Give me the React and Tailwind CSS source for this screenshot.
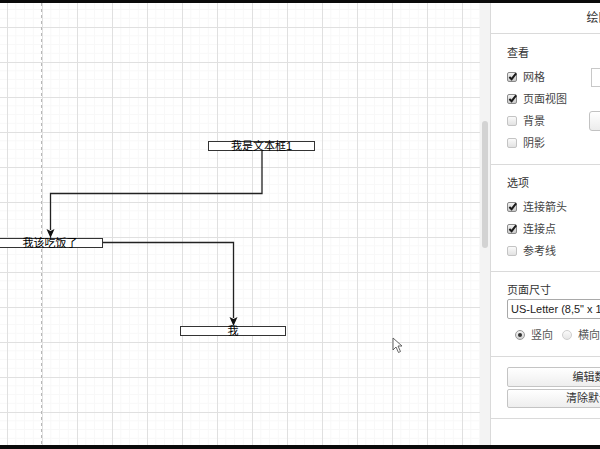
import React from 'react';

const font = "font-['Liberation_Sans','Noto_Sans_CJK_SC',sans-serif]";

function Check({ checked }) {
  return (
    <span
      className={`relative inline-block h-[10px] w-[10px] shrink-0 rounded-[2px] border ${
        checked ? 'border-[#8a8a8a] bg-gradient-to-b from-[#f2f2f2] to-[#c9c9c9]' : 'border-[#c4c4c4] bg-gradient-to-b from-[#fafafa] to-[#e2e2e2]'
      }`}
    >
      {checked ? (
        <svg viewBox="0 0 10 10" className="absolute left-[0px] top-[-1px] h-[9px] w-[9px]">
          <path d="M1.5 5.5 L4 8 L9 1.5" fill="none" stroke="#1a1a1a" strokeWidth="2.2" />
        </svg>
      ) : null}
    </span>
  );
}

function Row({ checked, label, children }) {
  return (
    <div className="flex h-[22px] items-center">
      <Check checked={checked} />
      <span className="ml-[6px] w-[68px] text-[11px] text-[#444]">{label}</span>
      {children}
    </div>
  );
}

function Radio({ checked }) {
  return (
    <span
      className={`flex h-[10px] w-[10px] items-center justify-center rounded-full border ${
        checked ? 'border-[#9a9a9a] bg-gradient-to-b from-[#f4f4f4] to-[#d0d0d0]' : 'border-[#cfcfcf] bg-gradient-to-b from-[#fafafa] to-[#e6e6e6]'
      }`}
    >
      {checked ? <span className="h-[4px] w-[4px] rounded-full bg-[#333]" /> : null}
    </span>
  );
}

function Canvas() {
  return (
    <div className="relative h-full w-[480px] shrink-0 overflow-hidden bg-white">
      <svg className="absolute inset-0" width="480" height="442" viewBox="0 3 480 442">
        <defs>
          <pattern id="grid" x="7" y="27" width="35" height="35" patternUnits="userSpaceOnUse">
            <path d="M8.75 0V35M17.5 0V35M26.25 0V35M0 8.75H35M0 17.5H35M0 26.25H35" stroke="#f8f8f8" strokeWidth="1" fill="none" />
            <path d="M0.5 0V35M0 0.5H35" stroke="#e0e0e0" strokeWidth="1" fill="none" />
          </pattern>
        </defs>
        <rect x="0" y="0" width="480" height="449" fill="url(#grid)" />
        <path d="M41.5 3V445" stroke="#b8b8b8" strokeWidth="1" strokeDasharray="3 3" />
        <path d="M262 150V193.5H50.5V230" fill="none" stroke="#222" strokeWidth="1.3" />
        <path d="M50.5 238 L46.5 229 L50.5 231 L54.5 229 Z" fill="#111" />
        <path d="M103 242.5H233.5V318" fill="none" stroke="#222" strokeWidth="1.3" />
        <path d="M233.5 326 L229.5 317 L233.5 319 L237.5 317 Z" fill="#111" />
        <path
          d="M393 338 L393 350 L396 347 L398.5 352.5 L400.5 351.5 L398 346 L402 346 Z"
          fill="#fff"
          stroke="#555"
          strokeWidth="0.9"
          strokeLinejoin="round"
        />
      </svg>
      <div className="absolute left-[208px] top-[138px] flex h-[10px] w-[107px] items-center justify-center border border-[#333] bg-white text-[11px] leading-[10px] text-black">
        我是文本框1
      </div>
      <div className="absolute left-[-3px] top-[235px] flex h-[10px] w-[106px] items-center justify-center border border-[#333] bg-white text-[11px] leading-[10px] text-black">
        我该吃饭了
      </div>
      <div className="absolute left-[180px] top-[323px] flex h-[10px] w-[106px] items-center justify-center border border-[#333] bg-white text-[11px] leading-[10px] text-black">
        我
      </div>
    </div>
  );
}

function Panel() {
  return (
    <div className="h-full w-[216px] shrink-0 border-l border-[#dadada] bg-white">
      <div className="flex h-[31px] items-center justify-center border-b border-[#dadada] text-[12px] text-[#333]">
        绘图
      </div>
      <div className="border-b border-[#dadada] pb-[10px] pl-[16px] pt-[12px]">
        <div className="mb-[6px] h-[14px] text-[11px] leading-[14px] text-[#333]">查看</div>
        <Row checked label="网格">
          <span className="h-[19px] w-[60px] border border-[#c8c8c8] bg-white" />
        </Row>
        <Row checked label="页面视图" />
        <Row label="背景">
          <span className="ml-[-2px] h-[20px] w-[60px] rounded-[3px] border border-[#c2c2c2] bg-gradient-to-b from-[#ffffff] to-[#ececec]" />
        </Row>
        <Row label="阴影" />
      </div>
      <div className="border-b border-[#dadada] pb-[9px] pl-[16px] pt-[11px]">
        <div className="mb-[6px] h-[14px] text-[11px] leading-[14px] text-[#333]">选项</div>
        <Row checked label="连接箭头" />
        <Row checked label="连接点" />
        <Row label="参考线" />
      </div>
      <div className="border-b border-[#dadada] pb-[12px] pl-[16px] pt-[11px]">
        <div className="h-[14px] text-[11px] leading-[14px] text-[#333]">页面尺寸</div>
        <div className="mt-[2px] flex h-[20px] w-[184px] items-center overflow-hidden whitespace-nowrap rounded-[2px] border border-[#a9a9a9] bg-white pl-[3px] text-[11px] text-[#222]">
          US-Letter (8,5" x 11")
        </div>
        <div className="mt-[7px] flex h-[18px] items-center pl-[8px] text-[11px] text-[#555]">
          <Radio checked />
          <span className="ml-[6px]">竖向</span>
          <span className="ml-[9px]">
            <Radio />
          </span>
          <span className="ml-[6px]">横向</span>
        </div>
      </div>
      <div className="border-b border-[#dadada] pb-[10px] pl-[16px] pt-[10px]">
        <div className="flex h-[20px] w-[184px] items-center justify-center rounded-[2px] border border-[#c4c4c4] bg-gradient-to-b from-[#ffffff] to-[#eeeeee] text-[11px] text-[#333]">
          编辑数据...
        </div>
        <div className="mt-[2px] flex h-[19px] w-[184px] items-center justify-center rounded-[2px] border border-[#c4c4c4] bg-gradient-to-b from-[#ffffff] to-[#eeeeee] text-[11px] text-[#333]">
          清除默认风格
        </div>
      </div>
    </div>
  );
}

export default function App() {
  return (
    <div className={`h-[449px] w-[600px] overflow-hidden bg-black ${font}`}>
      <div className="h-[3px] bg-[#0a0a0a]" />
      <div className="flex h-[442px] bg-white">
        <Canvas />
        <div className="relative h-full w-[10px] shrink-0 bg-[#f3f3f3]">
          <div className="absolute left-[2px] top-[118px] h-[127px] w-[6px] rounded-[3px] bg-[#d3d3d3]" />
        </div>
        <Panel />
      </div>
      <div className="h-[4px] bg-[#0a0a0a]" />
    </div>
  );
}
